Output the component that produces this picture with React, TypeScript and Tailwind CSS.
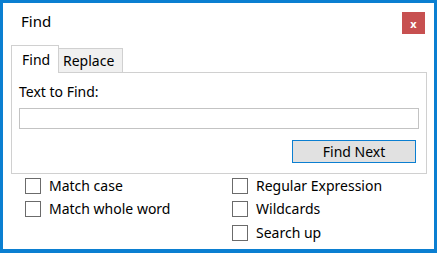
const font = { fontFamily: '"Noto Sans", "Open Sans", sans-serif' };

function Check({ label }: { label: string }) {
  return (
    <div className="flex items-center h-[23.5px]">
      <span className="w-[16px] h-[16px] border border-[#6b6b6b] bg-white shrink-0" />
      <span className="ml-[8px] text-[14px] leading-[20px] text-black">{label}</span>
    </div>
  );
}

export default function App() {
  return (
    <div
      className="w-[437px] h-[253px] bg-white border-l-[3px] border-t-[3px] border-r-[3px] border-b-[4px] border-[#0b7fd1] flex flex-col"
      style={font}
    >
      {/* title bar */}
      <div className="h-[42px] flex items-start justify-between pl-[18px] pr-[9px] pt-[9px]">
        <span className="text-[15px] leading-[22px] text-black -mt-[2px]">Find</span>
        <button className="w-[23px] h-[22px] bg-[#c75050] text-white text-[11px] font-bold leading-none flex items-center justify-center">
          x
        </button>
      </div>

      {/* tabs */}
      <div className="flex items-end ml-[8px] -mb-px relative z-10">
        <div className="h-[28px] w-[48px] border border-b-0 border-[#d0d0d0] bg-white flex items-start pl-[10px] pt-[4px] text-[14px] leading-[20px] text-black">
          Find
        </div>
        <div className="h-[25px] w-[64px] border border-l-0 border-[#d0d0d0] bg-[#f0f0f0] flex items-start pl-[4px] pt-[2px] text-[14px] leading-[20px] text-black">
          Replace
        </div>
      </div>

      {/* panel */}
      <div className="ml-[8px] w-[416px] h-[102px] border border-[#d0d0d0] bg-white flex flex-col pt-[9px] pl-[7px] pr-[7px]">
        <span className="text-[14px] leading-[20px] text-black">Text to Find:</span>
        <input className="mt-[6px] h-[21px] border border-[#c3c3c3] bg-white outline-none" />
        <div className="flex justify-end mt-[11px] pr-[3px]">
          <button className="w-[124px] h-[23px] bg-[#e1e1e1] border border-[#0b7fd1] text-[14px] leading-[20px] text-black">
            Find Next
          </button>
        </div>
      </div>

      {/* options */}
      <div className="flex ml-[22px]">
        <div className="w-[207px] flex flex-col">
          <Check label="Match case" />
          <Check label="Match whole word" />
        </div>
        <div className="flex flex-col">
          <Check label="Regular Expression" />
          <Check label="Wildcards" />
          <Check label="Search up" />
        </div>
      </div>
    </div>
  );
}
